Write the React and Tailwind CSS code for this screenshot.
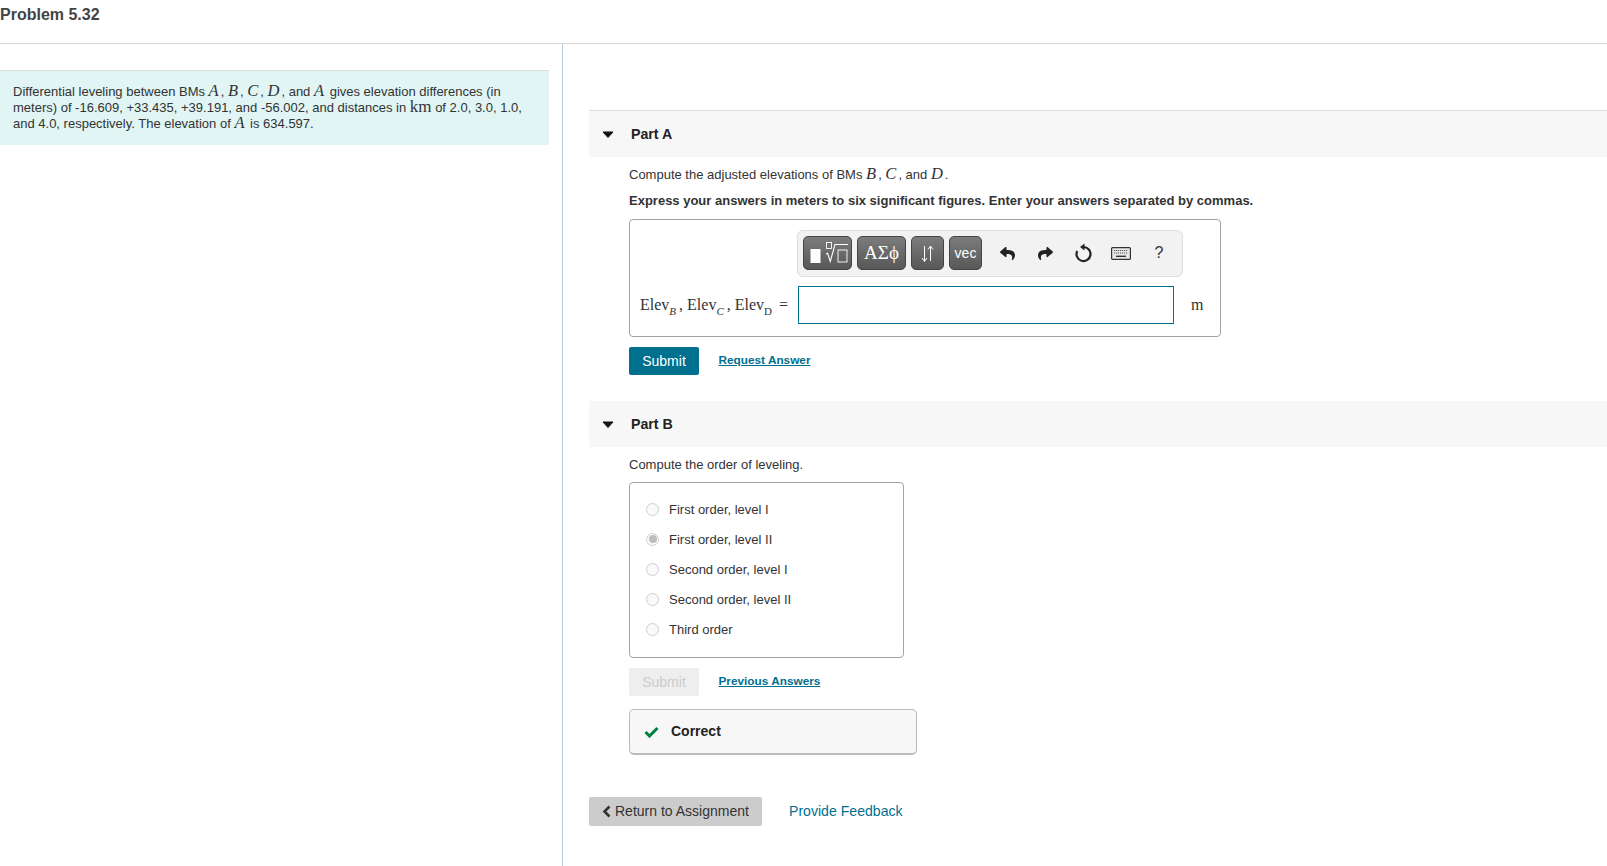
import React from "react";
import { FaReply, FaShare } from "react-icons/fa";

const M = ({ children }) => (
  <span className="font-['Liberation_Serif',serif] italic text-[16.5px] leading-[0] mr-[2px]">{children}</span>
);
const R = ({ children }) => (
  <span className="font-['Liberation_Serif',serif] text-[17px] leading-[0]">{children}</span>
);
const Sub = ({ children, italic }) => (
  <sub className={`text-[11px] leading-[0] align-[-2px] mr-[3px] ${italic ? "italic" : ""}`}>{children}</sub>
);

const Tool = ({ w, children }) => (
  <div className={`${w} h-[34px] shrink-0 flex items-center justify-center rounded-[5px] border border-[#444] bg-gradient-to-b from-[#7c7c7c] to-[#585858] text-white`}>
    {children}
  </div>
);

const PartBar = ({ label, top }) => (
  <div className={`flex items-center bg-[#f7f7f7] pt-[1px] ${top ? "h-[47px] border-t border-[#dddddd]" : "h-[46px]"}`}>
    <svg width="12" height="7" viewBox="0 0 12 7" className="ml-[13px]">
      <path d="M1 1h10L6 6.5z" fill="#111" stroke="#111" strokeLinejoin="round" />
    </svg>
    <span className="ml-[17px] text-[14.2px] font-bold text-[#222]">{label}</span>
  </div>
);

const Radio = ({ label, on }) => (
  <div className="h-[30px] flex items-center pl-[16px] gap-[10px]">
    <span className="w-[13px] h-[13px] mb-[2px] rounded-full border border-[#cfcfcf] bg-[#fafafa] flex items-center justify-center">
      {on && <span className="w-[8px] h-[8px] rounded-full bg-[#bdbdbd]" />}
    </span>
    <span className="text-[13px] text-[#333]">{label}</span>
  </div>
);

export default function App() {
  return (
    <div className="w-full h-[866px] overflow-hidden flex flex-col bg-white text-[#333] font-['Liberation_Sans',Arial,sans-serif]">
      <header className="h-[44px] shrink-0 border-b border-[#d9d9d9]">
        <h1 className="text-[16px] leading-[29px] font-bold text-[#444]">Problem 5.32</h1>
      </header>
      <div className="flex-1 flex min-h-0">
        <aside className="w-[563px] shrink-0 border-r border-[#b9cde0] pr-[13px] pt-[26px]">
          <div className="h-[75px] bg-[#e0f5f4] border-t border-[#d5dddd] pl-[13px] pr-[10px] pt-[13px] text-[13px] leading-[16.2px] text-[#333]">
            Differential leveling between BMs <M>A</M>, <M>B</M>, <M>C</M>, <M>D</M>, and <M>A</M> gives elevation differences (in meters) of -16.609, +33.435, +39.191, and -56.002, and distances in <R>km</R> of 2.0, 3.0, 1.0, and 4.0, respectively. The elevation of <M>A</M> is 634.597.
          </div>
        </aside>
        <main className="flex-1 min-w-0 pl-[26px] pt-[66px]">
          <PartBar label="Part A" top />
          <div className="pl-[40px]">
            <p className="mt-[8px] text-[13px] leading-[20px]">
              Compute the adjusted elevations of BMs <M>B</M>, <M>C</M>, and <M>D</M>.
            </p>
            <p className="mt-[6px] text-[13px] leading-[20px] font-bold">
              Express your answers in meters to six significant figures. Enter your answers separated by commas.
            </p>
            <div className="mt-[8px] w-[592px] h-[118px] rounded-[4px] border border-[#a3a3a3] pt-[10px]">
              <div className="ml-[167px] w-[386px] h-[47px] rounded-[6px] border border-[#dddddd] bg-[#f2f2f2] flex items-center pl-[5px] pb-[1px]">
                <div className="flex gap-[5px]">
                  <Tool w="w-[49px]">
                    <svg width="47" height="32" viewBox="1 1 47 32">
                      <rect x="7.5" y="13" width="10" height="14" fill="#fff" />
                      <rect x="23.5" y="6.5" width="5" height="6" fill="none" stroke="#fff" strokeWidth="0.9" />
                      <path d="M23 18l1.6-.7 2.7 8L32 8.5h13" fill="none" stroke="#fff" strokeWidth="1.1" />
                      <rect x="35" y="14" width="9" height="12" fill="none" stroke="#fff" strokeWidth="0.9" />
                    </svg>
                  </Tool>
                  <Tool w="w-[49px]">
                    <span className="font-['Liberation_Serif',serif] text-[19px]">ΑΣϕ</span>
                  </Tool>
                  <Tool w="w-[33px]">
                    <svg width="31" height="32" viewBox="1 1 31 32">
                      <path d="M13.5 10v15M11 22l2.5 3.5L16 22M19.5 25V10M17 13.5 19.5 10l2.5 3.5" fill="none" stroke="#fff" strokeWidth="1" />
                    </svg>
                  </Tool>
                  <Tool w="w-[33px]">
                    <span className="text-[14px]">vec</span>
                  </Tool>
                </div>
                <div className="flex items-center ml-[6px]">
                  <span className="w-[38px] flex justify-center"><FaReply className="text-[#222] text-[15px]" /></span>
                  <span className="w-[38px] flex justify-center"><FaShare className="text-[#222] text-[15px]" /></span>
                  <span className="w-[38px] flex justify-center">
                    <svg width="18" height="20" viewBox="0 0 18 20">
                      <path d="M9.5 4A7 7 0 1 1 3.2 8" fill="none" stroke="#222" strokeWidth="2.2" />
                      <path d="M10.5 .5v7L6 4z" fill="#222" />
                    </svg>
                  </span>
                  <span className="w-[38px] flex justify-center">
                    <svg width="20" height="13" viewBox="0 0 20 13">
                      <rect x=".6" y=".6" width="18.8" height="11.8" rx="1" fill="#e8e8e8" stroke="#333" strokeWidth="1.2" />
                      <path d="M3 3.5h14M3 6h14" stroke="#555" strokeWidth="1.2" strokeDasharray="1.2 .8" />
                      <path d="M5 9.3h10" stroke="#333" strokeWidth="1.4" />
                    </svg>
                  </span>
                  <span className="w-[38px] text-center text-[16px] text-[#333]">?</span>
                </div>
              </div>
              <div className="mt-[9px] flex items-center">
                <div className="w-[168px] shrink-0 pl-[10px] whitespace-nowrap font-['Liberation_Serif',serif] text-[16px] text-[#333]">
                  Elev<Sub italic>B</Sub>, Elev<Sub italic>C</Sub>, Elev<Sub>D</Sub> =
                </div>
                <input className="w-[376px] h-[38px] shrink-0 border-[1.5px] border-[#00708f] bg-white outline-none" />
                <span className="ml-[17px] font-['Liberation_Serif',serif] text-[16px]">m</span>
              </div>
            </div>
            <div className="mt-[10px] flex items-center gap-[19.5px]">
              <button className="w-[70px] h-[28px] rounded-[2px] bg-[#00708f] text-white text-[14px]">Submit</button>
              <a className="mb-[1px] text-[11.8px] font-bold text-[#00708f] underline">Request Answer</a>
            </div>
          </div>
          <div className="mt-[26px]"><PartBar label="Part B" /></div>
          <div className="pl-[40px]">
            <p className="mt-[8px] text-[13px] leading-[20px]">Compute the order of leveling.</p>
            <div className="mt-[7px] w-[275px] h-[176px] rounded-[4px] border border-[#a3a3a3] pt-[12px]">
              <Radio label="First order, level I" />
              <Radio label="First order, level II" on />
              <Radio label="Second order, level I" />
              <Radio label="Second order, level II" />
              <Radio label="Third order" />
            </div>
            <div className="mt-[10px] flex items-center gap-[19.5px]">
              <button className="w-[70px] h-[28px] rounded-[2px] bg-[#eeeeee] text-[#cccccc] text-[14px]">Submit</button>
              <a className="mb-[1px] text-[11.8px] font-bold text-[#00708f] underline">Previous Answers</a>
            </div>
            <div className="mt-[13px] w-[288px] h-[46px] rounded-[5px] border border-[#bbbbbb] border-b-2 bg-[#f7f7f7] flex items-center pl-[14px]">
              <svg width="15" height="12" viewBox="0 0 15 12">
                <path d="M1.5 6 5.5 10 13.5 2" fill="none" stroke="#00803c" strokeWidth="3" />
              </svg>
              <span className="ml-[12px] text-[14px] font-bold text-[#222]">Correct</span>
            </div>
          </div>
          <div className="mt-[42px] flex items-center gap-[27px]">
            <button className="w-[173px] h-[29px] rounded-[2px] bg-[#cccccc] flex items-center pl-[13px] text-[14px] text-[#333]">
              <svg width="9" height="13" viewBox="0 0 9 13" className="mr-[4px]">
                <path d="M7.5 1.5 2.5 6.5l5 5" fill="none" stroke="#333" strokeWidth="2.6" />
              </svg>
              Return to Assignment
            </button>
            <a className="text-[14.1px] text-[#00708f]">Provide Feedback</a>
          </div>
        </main>
      </div>
    </div>
  );
}
